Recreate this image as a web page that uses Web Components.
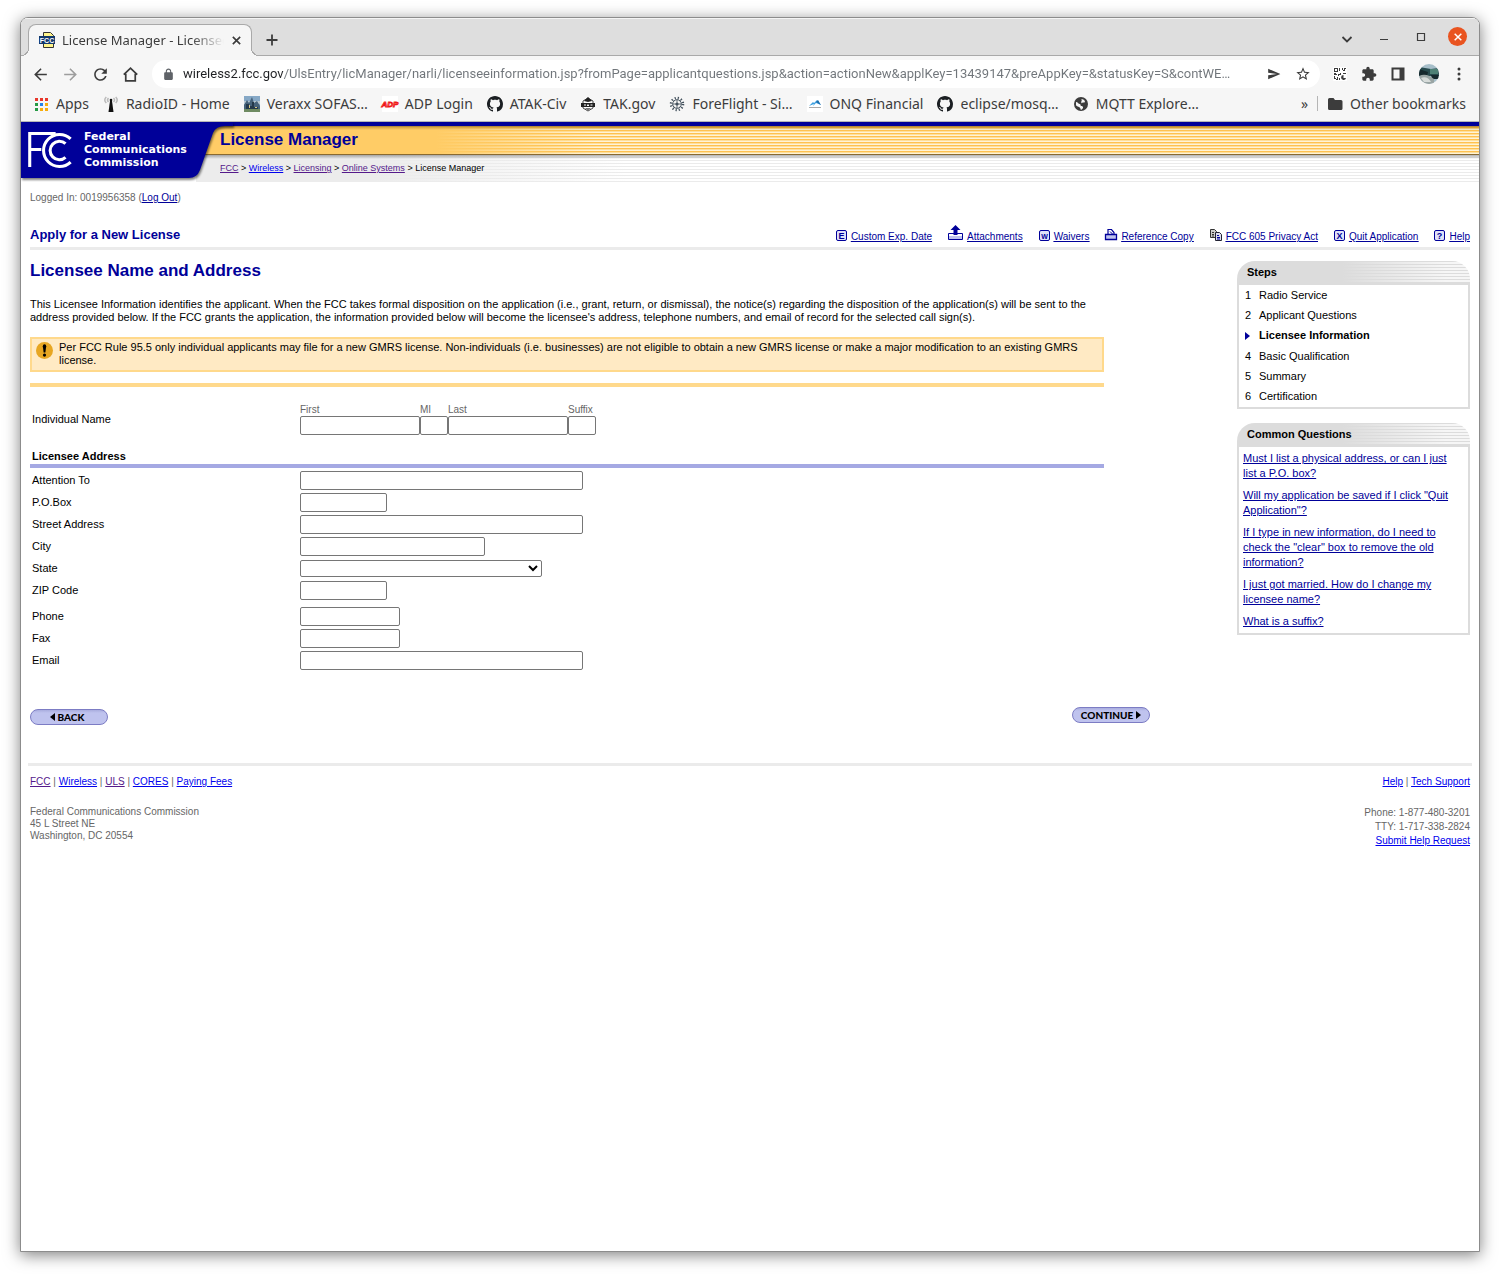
<!DOCTYPE html>
<html lang="en">
<head>
<meta charset="utf-8">
<meta name="viewport" content="width=device-width, initial-scale=1">
<title>License Manager - Licensee Information</title>
<style>
  :root {
    --navy: #000099;
    --link: #0000ee;
    --visited: #551a8b;
    --chrome: #f6f6f6;
    --ink: #3c3c3c;
    --rule: #ebebeb;
    --panel: #dcdcdc;
    --muted: #666;
    --ui-font: "Noto Sans", "Open Sans", sans-serif;
    --page-font: "Liberation Sans", Arial, sans-serif;
  }

  body {
    display: flex;
    min-height: 100vh;
    box-sizing: border-box;
    margin: 0;
    padding: 17px 20px 22px;
    background: white;
    font: 11px/13px var(--page-font);
    color: black;
  }
</style>
</head>
<body>
  <browser-window>
    <tab-strip slot="chrome">License Manager - Licensee</tab-strip>
    <nav-bar slot="chrome"></nav-bar>
    <bookmark-bar slot="chrome">
      <bookmark-link icon="apps">Apps</bookmark-link>
      <bookmark-link icon="antenna">RadioID - Home</bookmark-link>
      <bookmark-link icon="photo">Veraxx SOFAS…</bookmark-link>
      <bookmark-link icon="adp">ADP Login</bookmark-link>
      <bookmark-link icon="github">ATAK-Civ</bookmark-link>
      <bookmark-link icon="tak">TAK.gov</bookmark-link>
      <bookmark-link icon="gear">ForeFlight - Si…</bookmark-link>
      <bookmark-link icon="onq">ONQ Financial</bookmark-link>
      <bookmark-link icon="github">eclipse/mosq…</bookmark-link>
      <bookmark-link icon="globe">MQTT Explore…</bookmark-link>
      <bookmark-link slot="end" icon="folder">Other bookmarks</bookmark-link>
    </bookmark-bar>

    <page-banner>
      <span slot="title">License Manager</span>
      <crumb-links slot="crumbs"></crumb-links>
    </page-banner>
    <license-page></license-page>
    <page-footer></page-footer>
  </browser-window>

<script>
const icons = {
  back: ["0 0 24 24", `<path d="M20 11H7.83l5.59-5.59L12 4l-8 8 8 8 1.41-1.41L7.83 13H20v-2z"/>`],
  forward: ["0 0 24 24", `<path d="M12 4l-1.41 1.41L16.17 11H4v2h12.17l-5.58 5.59L12 20l8-8z"/>`],
  reload: ["0 0 24 24", `<path d="M17.65 6.35C16.2 4.9 14.21 4 12 4c-4.42 0-7.99 3.58-7.99 8s3.57 8 7.99 8c3.73 0 6.84-2.55 7.73-6h-2.08c-.82 2.33-3.04 4-5.65 4-3.31 0-6-2.69-6-6s2.69-6 6-6c1.66 0 3.14.69 4.22 1.78L13 11h7V4l-2.35 2.35z"/>`],
  home: ["0 0 24 24", `<path d="M3.500 12.200L12 4l8.500 8.200M6 11v9h12v-9" fill="none" stroke="currentColor" stroke-width="2.200"/>`],
  lock: ["0 0 24 24", `<path d="M18 8h-1V6c0-2.760-2.240-5-5-5S7 3.240 7 6v2H6c-1.100 0-2 .9-2 2v10c0 1.100.9 2 2 2h12c1.100 0 2-.9 2-2V10c0-1.100-.9-2-2-2zM9 6c0-1.660 1.340-3 3-3s3 1.340 3 3v2H9V6z"/>`],
  send: ["0 0 24 24", `<path d="M2.010 21L23 12 2.010 3 2 10l15 2-15 2z"/>`],
  star: ["0 0 24 24", `<path d="M22 9.240l-7.190-.62L12 2 9.190 8.630 2 9.240l5.460 4.730L5.820 21 12 17.270 18.180 21l-1.630-7.030L22 9.240zM12 15.400l-3.760 2.270 1-4.280-3.320-2.880 4.380-.38L12 6.100l1.710 4.040 4.380.38-3.320 2.880 1 4.280L12 15.400z"/>`],
  puzzle: ["0 0 24 24", `<path d="M20.500 11H19V7c0-1.100-.9-2-2-2h-4V3.500C13 2.120 11.880 1 10.500 1S8 2.120 8 3.500V5H4c-1.100 0-1.990.9-1.990 2v3.800H3.500c1.490 0 2.700 1.210 2.700 2.700s-1.210 2.700-2.700 2.700H2V20c0 1.100.9 2 2 2h3.800v-1.500c0-1.490 1.210-2.700 2.700-2.700s2.700 1.210 2.700 2.700V22H17c1.100 0 2-.9 2-2v-4h1.500c1.380 0 2.500-1.120 2.500-2.500S21.880 11 20.500 11z"/>`],
  panel: ["0 0 14 14", `<path d="M.5.5h13v13H.5zM2.500 2.500v9h6v-9z" fill-rule="evenodd"/>`],
  dots: ["0 0 12 16", `<circle cx="6" cy="3" r="1.500"/><circle cx="6" cy="8" r="1.500"/><circle cx="6" cy="13" r="1.500"/>`],
  qr: ["0 0 14 14", `<rect width="14" height="14" rx="1" fill="#fff"/><path d="M1 1h4v4H1zM2 2v2h2V2zM9 1h1v2H9zM11 1h2v1h-1v2h-2V3h1zM6 1h1v3H6zM1 6h2v1h1v1H1zM5 7h2V6h1v2H6v1H5zM10 6h3v1h-3zM1 9h1v2h1v1H1zM4 10h1v3H3v-1h1zM6 11h1v2H6z" fill-rule="evenodd"/><path d="M10.500 8a2.500 2.500 0 102.500 3h-2.500z"/>`],
  avatar: ["0 0 20 20", `<defs><clipPath id="c"><circle cx="10" cy="10" r="10"/></clipPath></defs><g clip-path="url(#c)"><path fill="#a6bec9" d="M0 0h20v20H0z"/><path fill="#274a4d" d="M0 3l12 2 8-1v8H0z"/><path fill="#4e8176" d="M11 5h8v5h-8z"/><path fill="#16292d" d="M0 5l9 3-1 4H0zM12 11h8v4h-7z"/><path fill="#9aa5a4" d="M0 12c6-3 11 0 15 3v5H0z"/><path fill="#d7dcda" d="M2 14c4-2 8 0 10 4H5z"/></g>`],
  apps: ["0 0 16 16", `<g fill="#e8372b"><path d="M2 2h3v3H2zM7 2h3v3H7zM12 2h3v3h-3z"/></g><path fill="#269a45" d="M2 7h3v3H2zM2 12h3v3H2z"/><path fill="#2583e8" d="M7 7h3v3H7z"/><path fill="#f7ad0c" d="M12 7h3v3h-3zM7 12h3v3H7zM12 12h3v3h-3z"/>`],
  antenna: ["0 0 16 16", `<path d="M7 5h2l1.500 11h-5z" fill="#111"/><circle cx="8" cy="4" r="1.300" fill="#111"/><g fill="none" stroke="#bbb" stroke-width="1.500"><path d="M5.500 2q-2 2 0 4M3.300 1q-3 3 0 6M10.500 2q2 2 0 4M12.700 1q3 3 0 6"/></g>`],
  photo: ["0 0 16 16", `<path fill="#86a8c6" d="M0 0h16v16H0z"/><path fill="#b9c8d2" d="M0 5h16v3H0z"/><path fill="#46627a" d="M0 9l3-5 2 3 3-6 2 6 3-2 3 5v6H0z"/><path fill="#24384a" d="M2 8h3v2h3V6h2v5h4v3H2z"/><path fill="#6f8b62" d="M0 13h16v3H0z"/><path fill="#dcc987" d="M5 9h1v3H5zM11 11h2v1h-2z"/>`],
  adp: ["0 0 16 16", `<rect width="16" height="16" fill="#fff"/><text x="8" y="11" text-anchor="middle" font-family="Liberation Sans" font-size="8" font-weight="700" font-style="italic" fill="#fff" stroke="#f01818" stroke-width=".9">ADP</text>`],
  github: ["0 0 16 16", `<path fill="#1b1f23" d="M8 0C3.580 0 0 3.580 0 8c0 3.540 2.290 6.530 5.470 7.590.4.070.55-.17.55-.38 0-.19-.01-.82-.01-1.490-2.010.37-2.530-.49-2.690-.94-.09-.23-.48-.94-.82-1.130-.28-.15-.68-.52-.01-.53.63-.01 1.080.58 1.230.82.72 1.210 1.870.87 2.330.66.070-.52.28-.87.51-1.070-1.780-.2-3.640-.89-3.640-3.950 0-.87.31-1.590.82-2.150-.08-.2-.36-1.020.08-2.120 0 0 .67-.21 2.200.82.64-.18 1.320-.27 2-.27s1.360.09 2 .27c1.530-1.040 2.200-.82 2.200-.82.44 1.100.16 1.920.08 2.120.51.56.82 1.270.82 2.150 0 3.070-1.870 3.750-3.650 3.950.29.25.54.73.54 1.480 0 1.070-.01 1.930-.01 2.200 0 .21.15.46.55.38A8 8 0 0016 8c0-4.420-3.580-8-8-8z"/>`],
  tak: ["0 0 16 16", `<path d="M8 2l5 3v7l-5 3-5-3V5z" fill="#fff" stroke="#444"/><path d="M4 5l4-4 4 4-4 1zM1 7h14v4H1z" fill="#222"/><path d="M4 9h2M7.200 10l.8-1.500.8 1.500M10.500 9h2" stroke="#fff" fill="none"/><path d="M5 12h6l-3 3z" fill="#777"/>`],
  gear: ["0 0 16 16", `<g fill="none" stroke="#42505c"><circle cx="8" cy="8" r="6" stroke-width="2.500" stroke-dasharray="1.200 1.942"/><circle cx="8" cy="8" r="4.300"/><path d="M8 4v8M4 8h8" stroke-width=".8"/></g><circle cx="8" cy="8" r="1.600" fill="#42505c"/>`],
  onq: ["0 0 16 16", `<path fill="#fff" d="M0 0h16v16H0z"/><path fill="#3b9fe0" d="M2 10l4-4 1 1 3-3 4 5-5-2-3 3 1-2z"/><path fill="#1b6cab" d="M9 6l2-2 3 5z"/><path fill="#aaa" d="M2 11h12v1H2z"/>`],
  globe: ["0 0 16 16", `<circle cx="8" cy="8" r="7" fill="#3c3c3c"/><path fill="#f6f6f6" d="M3 6c2 0 2 2 4 2 1 1 0 2 2 2 2 1 1 3-1 4-1-1 0-2-2-3S3 10 3 9zM8 3c2 0 4 1 4 3-1 1-2 0-3 1S8 5 9 4z"/>`],
  folder: ["0 0 16 16", `<path d="M2.500 2h4l1.500 2h6a1.500 1.500 0 011.500 1.500v7a1.500 1.500 0 01-1.500 1.500h-11.500A1.500 1.500 0 011 12.500v-9A1.500 1.500 0 012.500 2z"/>`],
  fcc: ["0 0 16 16", `<path d="M4.500.5h7l3 3v12h-10z" fill="#fff48a" stroke="#333"/><path fill="#12386b" d="M0 4h16v8H0z"/><text x="8" y="11" text-anchor="middle" font-family="Liberation Sans" font-size="7" font-weight="700" fill="#fff">FCC</text>`],
  close: ["0 0 12 12", `<path d="M2 2l8 8M10 2l-8 8" fill="none" stroke="currentColor" stroke-width="1.800"/>`],
  plus: ["0 0 12 12", `<path d="M6 .5v11M.5 6h11" fill="none" stroke="currentColor" stroke-width="1.800"/>`],
  chevron: ["0 0 12 12", `<path d="M1.500 6L6 10.500 10.500 6" fill="none" stroke="currentColor" stroke-width="1.800"/>`],
  minimize: ["0 0 12 12", `<path d="M2 8.500h8" stroke="currentColor"/>`],
  maximize: ["0 0 12 12", `<path d="M2.500 2.500h7v7h-7z" fill="none" stroke="currentColor" stroke-width="1.200"/>`],
  attach: ["0 0 15 16", `<path d="M.5 8.500h14v6H.5z" fill="#fff" stroke="#000099"/><path d="M1 11h13v3H1z" fill="#bfc3ee"/><path d="M7.500 0l5 5h-3v5h-4V5h-3z" fill="#000099"/>`],
  copy: ["0 0 12 12", `<path d="M3 5V.5h3.500l2.500 3V5" fill="#fff" stroke="#000099" stroke-width="1.200"/><path d="M.5 5.500h11v5H.5z" fill="#bfc3ee" stroke="#000099" stroke-width="1.300"/><path d="M5 2.500l3 3" stroke="#000099"/>`],
  pages: ["0 0 12 12", `<path d="M.5.5h4l2 2v6h-6z" fill="#ccc" stroke="#333"/><path d="M2 3.500h2M2 5.500h2M2 7h2" stroke="#333"/><path d="M5.500 3.500h4l2 2v6h-6z" fill="#dde" stroke="#223"/><path d="M7 6.500h2M7 8.500h3M7 10h3" stroke="#000099"/>`],
  alert: ["0 0 18 18", `<circle cx="9" cy="9" r="9" fill="#e7a622"/><path d="M7.200 4.500q0-2 1.800-2t1.800 2l-.9 6.500H8.100z"/><circle cx="9" cy="13.800" r="1.700"/>`],
  marker: ["0 0 5 8", `<path d="M0 0l5 4-5 4z" fill="#000099"/>`],
  left: ["0 0 5 8", `<path d="M5 0L0 4l5 4z"/>`],
  right: ["0 0 5 8", `<path d="M0 0l5 4-5 4z"/>`],
};

// boxed one-letter icons of the action links
for (const [name, letter] of [["exp", "E"], ["waiver", "W"], ["quit", "X"], ["help", "?"]]) {
  icons[name] = ["0 0 11 11", `<rect x=".5" y=".5" width="10" height="10" rx="1.500" fill="#dfe1f8" stroke="#000099"/><text x="5.500" y="8.600" text-anchor="middle" font-family="Liberation Sans" font-size="${letter === "W" ? 7 : 9}" font-weight="700" fill="#000099">${letter}</text>`];
}

function define(name, html, setup) {
  const template = document.createElement("template");
  template.innerHTML = html;

  customElements.define(
    name,
    class extends HTMLElement {
      constructor() {
        super();
        this.attachShadow({ mode: "open" }).append(template.content.cloneNode(true));
      }

      connectedCallback() {
        setup?.call(this, this.shadowRoot);
      }
    },
  );
}

// puts the icon named by the host in front of its link text
function addIcon(root, size) {
  const icon = document.createElement("ui-icon");
  icon.setAttribute("name", root.host.getAttribute("icon"));
  icon.setAttribute("size", root.host.getAttribute("size") ?? size);
  root.querySelector("a").prepend(icon);
}

define("ui-icon", `
  <style>
    :host { display: block; flex: none; width: 16px; }
    svg { display: block; width: 100%; fill: currentColor; overflow: visible; }
  </style>
  <svg aria-hidden="true"></svg>
`, function (root) {
  const [box, shapes] = icons[this.getAttribute("name")];
  const svg = root.querySelector("svg");
  svg.setAttribute("viewBox", box);
  svg.innerHTML = shapes;
  if (this.hasAttribute("size")) this.style.width = `${this.getAttribute("size")}px`;
});

define("browser-window", `
  <style>
    :host {
      display: flex;
      flex-direction: column;
      flex: 1;
      min-width: 0;
      border: 1px solid #8c8c8c;
      border-radius: 8px 8px 0 0;
      overflow: hidden;
      background: white;
      box-shadow: 0 3px 16px rgb(0 0 0 / .5);
    }
    header { border-bottom: 1px solid #b8b8b8; background: var(--chrome); color: var(--ink); }
    main { flex: 1; }
  </style>
  <header><slot name="chrome"></slot></header>
  <main><slot></slot></main>
`);

define("tab-strip", `
  <style>
    :host {
      display: flex;
      height: 37px;
      background: #dedede;
      border-bottom: 1px solid #a9a9a9;
      box-shadow: inset 0 1px #f4f4f4;
      font: 13px/20px var(--ui-font);
    }
    button { border: none; padding: 0; background: none; color: inherit; }
    .tab {
      position: relative;
      display: flex;
      align-items: center;
      gap: 7px;
      box-sizing: border-box;
      width: 224px;
      height: 32px;
      margin: 6px 0 0 7px;
      padding: 0 9px 1px 10px;
      background: var(--chrome);
      border: 1px solid #a9a9a9;
      border-bottom: none;
      border-radius: 8px 8px 0 0;
    }
    /* the feet that flare out at both sides */
    .tab::before, .tab::after {
      content: "";
      position: absolute;
      bottom: 0;
      width: 8px;
      height: 8px;
    }
    .tab::before { right: 100%; background: radial-gradient(circle at 0 0, transparent 7px, #a9a9a9 7px 8px, var(--chrome) 8px); }
    .tab::after { left: 100%; background: radial-gradient(circle at 8px 0, transparent 7px, #a9a9a9 7px 8px, var(--chrome) 8px); }
    .title {
      flex: 1;
      overflow: hidden;
      white-space: nowrap;
      mask-image: linear-gradient(90deg, black 80%, transparent);
    }
    .new { margin-left: 14px; padding-top: 6px; }
    .controls { display: flex; align-items: center; gap: 25px; margin-left: auto; padding-right: 12px; }
    .controls .close {
      display: grid;
      place-items: center;
      width: 19px;
      height: 19px;
      margin-left: -4px;
      border-radius: 50%;
      background: #e95420;
      color: white;
    }
  </style>
  <div class="tab">
    <ui-icon name="fcc"></ui-icon>
    <span class="title"><slot></slot></span>
    <button aria-label="Close tab"><ui-icon name="close" size="11"></ui-icon></button>
  </div>
  <button class="new" aria-label="New tab"><ui-icon name="plus" size="12"></ui-icon></button>
  <div class="controls">
    <button aria-label="Search tabs"><ui-icon name="chevron" size="12"></ui-icon></button>
    <button aria-label="Minimize"><ui-icon name="minimize" size="12"></ui-icon></button>
    <button aria-label="Maximize"><ui-icon name="maximize" size="12"></ui-icon></button>
    <button class="close" aria-label="Close"><ui-icon name="close" size="10"></ui-icon></button>
  </div>
`);

define("nav-bar", `
  <style>
    :host { display: flex; align-items: center; gap: 11px; padding: 4px 14px 0 10px; }
    button { display: block; border: none; padding: 0; background: none; color: inherit; }
    .disabled { color: #9d9d9d; }
    .address {
      display: flex;
      flex: 1;
      align-items: center;
      gap: 8px;
      height: 28px;
      margin: 0 2px 0 1px;
      padding: 0 9px 0 10px;
      border-radius: 14px;
      background: white;
    }
    .address ui-icon { color: #5f6368; }
    .address button ui-icon { color: var(--ink); }
    .address button + button { margin-left: 6px; }
    /* the host name is darker than the rest of the address */
    input {
      flex: 1;
      min-width: 0;
      border: none;
      outline: none;
      padding: 0;
      font: 13px/20px Roboto, sans-serif;
      color: transparent;
      background: linear-gradient(90deg, #202124 101px, #70757a 101px);
      background-clip: text;
    }
    .tools { display: flex; align-items: center; gap: 14px; }
  </style>
  <button aria-label="Back"><ui-icon name="back" size="19"></ui-icon></button>
  <button class="disabled" aria-label="Forward"><ui-icon name="forward" size="19"></ui-icon></button>
  <button aria-label="Reload"><ui-icon name="reload" size="19"></ui-icon></button>
  <button aria-label="Home"><ui-icon name="home" size="19"></ui-icon></button>
  <div class="address">
    <ui-icon name="lock" size="13"></ui-icon>
    <input aria-label="Address" value="wireless2.fcc.gov/UlsEntry/licManager/narli/licenseeinformation.jsp?fromPage=applicantquestions.jsp&amp;action=actionNew&amp;applKey=13439147&amp;preAppKey=&amp;statusKey=S&amp;contWE…">
    <button aria-label="Share"><ui-icon name="send" size="14"></ui-icon></button>
    <button aria-label="Bookmark"><ui-icon name="star" size="16"></ui-icon></button>
  </div>
  <div class="tools">
    <button aria-label="QR code"><ui-icon name="qr" size="14"></ui-icon></button>
    <button aria-label="Extensions"><ui-icon name="puzzle" size="16"></ui-icon></button>
    <button aria-label="Side panel"><ui-icon name="panel" size="14"></ui-icon></button>
    <button aria-label="Profile"><ui-icon name="avatar" size="20"></ui-icon></button>
    <button aria-label="Menu"><ui-icon name="dots" size="12"></ui-icon></button>
  </div>
`);

define("bookmark-bar", `
  <style>
    :host { display: flex; align-items: center; gap: 14px; height: 31px; padding: 0 13px 2px 12px; font: 14px/20px var(--ui-font); }
    .end { display: flex; align-items: center; gap: 9px; margin-left: auto; }
    button { border: none; padding: 0; background: none; font: inherit; color: inherit; }
    .divider { width: 1px; height: 15px; background: #b5b5b5; }
  </style>
  <slot></slot>
  <div class="end">
    <button aria-label="More bookmarks">»</button>
    <span class="divider"></span>
    <slot name="end"></slot>
  </div>
`);

define("bookmark-link", `
  <style>
    :host { display: block; white-space: nowrap; }
    a { display: flex; align-items: center; gap: 7px; color: inherit; text-decoration: none; }
  </style>
  <a href="#"><slot></slot></a>
`, (root) => addIcon(root, 16));

define("page-banner", `
  <style>
    :host { display: grid; grid-template-columns: 199px 1fr; border-top: 4px solid var(--navy); }
    .logo { position: relative; height: 56px; }
    .shape { position: absolute; top: -4px; left: 0; width: 199px; height: 62px; overflow: visible; filter: drop-shadow(1px 2px 1px rgb(0 0 0 / .5)); }
    .brand { position: relative; display: flex; align-items: center; gap: 12px; padding: 4px 0 0 6px; }
    .brand svg { width: 45px; height: 39px; }
    .name { color: white; font: bold 11px/13px "DejaVu Sans", sans-serif; }
    .bars { margin-left: -24px; }
    .title {
      height: 29px;
      box-sizing: border-box;
      padding: 3px 0 0 24px;
      border-top: 1px solid #b58a3a;
      border-bottom: 1px solid #8a6a30;
      background:
        linear-gradient(rgb(120 80 0 / .35), transparent 3px),
        linear-gradient(90deg, #ffcc66 240px, transparent 400px),
        repeating-linear-gradient(#ffc14f 0 1px, #ffdf9a 1px 2px, #fff3d6 2px 3px);
      font: bold 17px/20px var(--page-font);
      color: var(--navy);
    }
    .crumbs {
      height: 27px;
      box-sizing: border-box;
      padding: 7px 0 0 24px;
      background:
        linear-gradient(rgb(0 0 0 / .3), transparent 4px),
        linear-gradient(90deg, #ececec 180px, transparent 430px),
        repeating-linear-gradient(white 0 2px, #ebebeb 2px 3px);
      font-size: 9px;
    }
  </style>
  <div class="logo">
    <svg class="shape" viewBox="0 0 199 62" aria-hidden="true">
      <path d="M0 0h212v4h-8q-9 0-12 7l-13 37q-3 8-11 8H0z" fill="#000099"/>
    </svg>
    <div class="brand">
      <svg viewBox="0 0 132 114" role="img" aria-label="FCC">
        <g fill="none" stroke="white" stroke-width="9">
          <path d="M84 10H8v98M8 57h34"/>
          <path d="M128 26A47 47 0 1 0 128 94"/>
          <path d="M113 40A27 27 0 1 0 113 80"/>
        </g>
      </svg>
      <div class="name">Federal<br>Communications<br>Commission</div>
    </div>
  </div>
  <div class="bars">
    <div class="title"><slot name="title"></slot></div>
    <div class="crumbs"><slot name="crumbs"></slot></div>
  </div>
`);

define("crumb-links", `
  <style>
    :host { display: block; }
    a { color: var(--visited); }
    .new { color: var(--link); }
  </style>
  <a href="#">FCC</a> &gt; <a class="new" href="#">Wireless</a> &gt; <a href="#">Licensing</a> &gt; <a href="#">Online Systems</a> &gt; License Manager
`);

define("tool-link", `
  <style>
    :host { display: block; }
    a { display: flex; align-items: flex-end; gap: 4px; color: var(--navy); }
    ui-icon { margin-bottom: 2px; }
    span { text-decoration: underline; }
  </style>
  <a href="#"><span><slot></slot></span></a>
`, (root) => addIcon(root, 11));

define("form-row", `
  <style>
    :host { display: grid; grid-template-columns: 268px 1fr; align-items: center; min-height: 19px; margin-left: 2px; }
    div { display: flex; }
    input, select {
      box-sizing: border-box;
      height: 19px;
      margin: 0;
      border: 1px solid #767676;
      border-radius: 2px;
      background: white;
      font: 12px var(--page-font);
    }
    select { height: 17px; padding: 0; }
  </style>
  <label for="field"></label>
  <div></div>
`, function (root) {
  root.querySelector("label").textContent = this.getAttribute("label");
  const field = document.createElement(this.hasAttribute("select") ? "select" : "input");
  field.id = "field";
  field.style.width = `${this.getAttribute("width")}px`;
  root.querySelector("div").append(field);
});

define("name-row", `
  <style>
    :host { display: grid; grid-template-columns: 268px 1fr; align-items: center; margin-left: 2px; }
    div { display: flex; }
    label { display: flex; flex-direction: column; font-size: 10px; color: var(--muted); }
    input { box-sizing: border-box; width: 28px; height: 19px; margin: 0; border: 1px solid #767676; border-radius: 2px; }
    .wide { width: 120px; }
  </style>
  <span>Individual Name</span>
  <div>
    <label>First<input class="wide"></label>
    <label>MI<input></label>
    <label>Last<input class="wide"></label>
    <label>Suffix<input></label>
  </div>
`);

define("pill-button", `
  <style>
    :host { display: block; }
    button {
      display: flex;
      align-items: center;
      justify-content: center;
      gap: 3px;
      width: 78px;
      height: 16px;
      padding: 0 4px 0 0;
      border: 1px solid #7c7cc4;
      border-radius: 8px;
      background: linear-gradient(#a9adde, #bfc3ee 3px);
      font: 900 10px/14px Lato, sans-serif;
      color: black;
    }
    :host([next]) button { padding: 0; }
  </style>
  <button type="button"><slot></slot></button>
`);

define("side-panel", `
  <style>
    :host { display: block; }
    h2 {
      margin: 0;
      padding: 5px 10px 4px;
      border-radius: 18px 18px 0 0;
      background:
        linear-gradient(90deg, var(--panel) 45%, transparent 90%),
        repeating-linear-gradient(var(--panel) 0 1px, #f6f6f6 1px 3px);
      font: bold 11px/13px var(--page-font);
    }
    div { border: 2px solid var(--panel); }
  </style>
  <h2><slot name="title"></slot></h2>
  <div><slot></slot></div>
`);

define("step-list", `
  <style>
    :host { display: block; }
    ol { display: grid; grid-auto-rows: 1fr; min-height: 122px; margin: 0; padding: 0 6px; list-style: none; }
    li { display: grid; grid-template-columns: 14px 1fr; align-items: center; }
    .current { font-weight: bold; }
  </style>
  <ol>
    <li><span>1</span><span>Radio Service</span></li>
    <li><span>2</span><span>Applicant Questions</span></li>
    <li class="current"><ui-icon name="marker" size="5"></ui-icon><span>Licensee Information</span></li>
    <li><span>4</span><span>Basic Qualification</span></li>
    <li><span>5</span><span>Summary</span></li>
    <li><span>6</span><span>Certification</span></li>
  </ol>
`);

define("question-list", `
  <style>
    :host { display: block; }
    ul { display: grid; gap: 7px; margin: 0; padding: 4px 12px 4px 4px; list-style: none; line-height: 15px; }
    a { color: var(--navy); }
  </style>
  <ul>
    <li><a href="#">Must I list a physical address, or can I just list a P.O. box?</a></li>
    <li><a href="#">Will my application be saved if I click "Quit Application"?</a></li>
    <li><a href="#">If I type in new information, do I need to check the "clear" box to remove the old information?</a></li>
    <li><a href="#">I just got married. How do I change my licensee name?</a></li>
    <li><a href="#">What is a suffix?</a></li>
  </ul>
`);

define("license-page", `
  <style>
    :host { display: block; padding: 9px 9px 0; }
    .session { font-size: 10px; color: var(--muted); }
    .session a { color: var(--navy); }
    .heading {
      display: flex;
      align-items: flex-end;
      justify-content: space-between;
      height: 39px;
      padding-bottom: 4px;
      border-bottom: 3px solid var(--rule);
    }
    h1, h2, h3 { margin: 0; color: var(--navy); }
    h1 { font-size: 13px; line-height: 16px; }
    h2 { font-size: 17px; line-height: 20px; }
    h3 { padding: 15px 2px 1px; border-bottom: 4px solid #a5a9e3; font-size: 11px; line-height: 13px; color: black; }
    nav { display: flex; align-items: flex-end; gap: 16px; font-size: 10px; }
    .columns { display: grid; grid-template-columns: 1fr 233px; gap: 87px; align-items: start; padding-top: 11px; }
    .form { margin-right: 46px; }
    p { margin: 17px 0 13px; }
    .notice {
      display: flex;
      gap: 6px;
      padding: 2px 4px 3px;
      border: 2px solid #ffd98c;
      background: #ffeac4;
    }
    .notice ui-icon { margin-top: 1px; }
    .bar { height: 4px; margin: 11px 0 16px; background: #ffd98c; }
    .fields { display: grid; gap: 3px; padding-top: 3px; }
    .fields + .fields { padding-top: 7px; }
    .actions { display: flex; justify-content: space-between; padding-top: 37px; }
    .actions pill-button:first-child { padding-top: 2px; }
    aside { display: grid; gap: 14px; }
  </style>
  <div class="session">Logged In: 0019956358 (<a href="#">Log Out</a>)</div>
  <div class="heading">
    <h1>Apply for a New License</h1>
    <nav>
      <tool-link icon="exp">Custom Exp. Date</tool-link>
      <tool-link icon="attach" size="15">Attachments</tool-link>
      <tool-link icon="waiver">Waivers</tool-link>
      <tool-link icon="copy" size="12">Reference Copy</tool-link>
      <tool-link icon="pages" size="12">FCC 605 Privacy Act</tool-link>
      <tool-link icon="quit">Quit Application</tool-link>
      <tool-link icon="help">Help</tool-link>
    </nav>
  </div>
  <div class="columns">
    <section>
      <div class="form">
        <h2>Licensee Name and Address</h2>
        <p>This Licensee Information identifies the applicant. When the FCC takes formal disposition on the application (i.e., grant, return, or dismissal), the notice(s) regarding the disposition of the application(s) will be sent to the address provided below. If the FCC grants the application, the information provided below will become the licensee's address, telephone numbers, and email of record for the selected call sign(s).</p>
        <div class="notice">
          <ui-icon name="alert" size="17"></ui-icon>
          <span>Per FCC Rule 95.5 only individual applicants may file for a new GMRS license. Non-individuals (i.e. businesses) are not eligible to obtain a new GMRS license or make a major modification to an existing GMRS license.</span>
        </div>
        <div class="bar"></div>
        <name-row></name-row>
        <h3>Licensee Address</h3>
        <div class="fields">
          <form-row label="Attention To" width="283"></form-row>
          <form-row label="P.O.Box" width="87"></form-row>
          <form-row label="Street Address" width="283"></form-row>
          <form-row label="City" width="185"></form-row>
          <form-row label="State" width="242" select></form-row>
          <form-row label="ZIP Code" width="87"></form-row>
        </div>
        <div class="fields">
          <form-row label="Phone" width="100"></form-row>
          <form-row label="Fax" width="100"></form-row>
          <form-row label="Email" width="283"></form-row>
        </div>
      </div>
      <div class="actions">
        <pill-button><ui-icon name="left" size="5"></ui-icon>BACK</pill-button>
        <pill-button next>CONTINUE<ui-icon name="right" size="5"></ui-icon></pill-button>
      </div>
    </section>
    <aside>
      <side-panel><span slot="title">Steps</span><step-list></step-list></side-panel>
      <side-panel><span slot="title">Common Questions</span><question-list></question-list></side-panel>
    </aside>
  </div>
`);

define("page-footer", `
  <style>
    :host { display: block; margin: 38px 7px 0; border-top: 3px solid var(--rule); font-size: 10px; color: var(--muted); }
    .row { display: flex; justify-content: space-between; padding: 9px 2px 0; }
    .row + .row { padding-top: 18px; }
    address { font-style: normal; line-height: 12px; }
    .contact { line-height: 14px; text-align: right; }
    a { color: var(--link); }
    .seen { color: var(--visited); }
  </style>
  <div class="row">
    <div><a class="seen" href="#">FCC</a> | <a href="#">Wireless</a> | <a class="seen" href="#">ULS</a> | <a href="#">CORES</a> | <a href="#">Paying Fees</a></div>
    <div><a href="#">Help</a> | <a href="#">Tech Support</a></div>
  </div>
  <div class="row">
    <address>Federal Communications Commission<br>45 L Street NE<br>Washington, DC 20554</address>
    <div class="contact">Phone: 1-877-480-3201<br>TTY: 1-717-338-2824<br><a href="#">Submit Help Request</a></div>
  </div>
`);
</script>
</body>
</html>
